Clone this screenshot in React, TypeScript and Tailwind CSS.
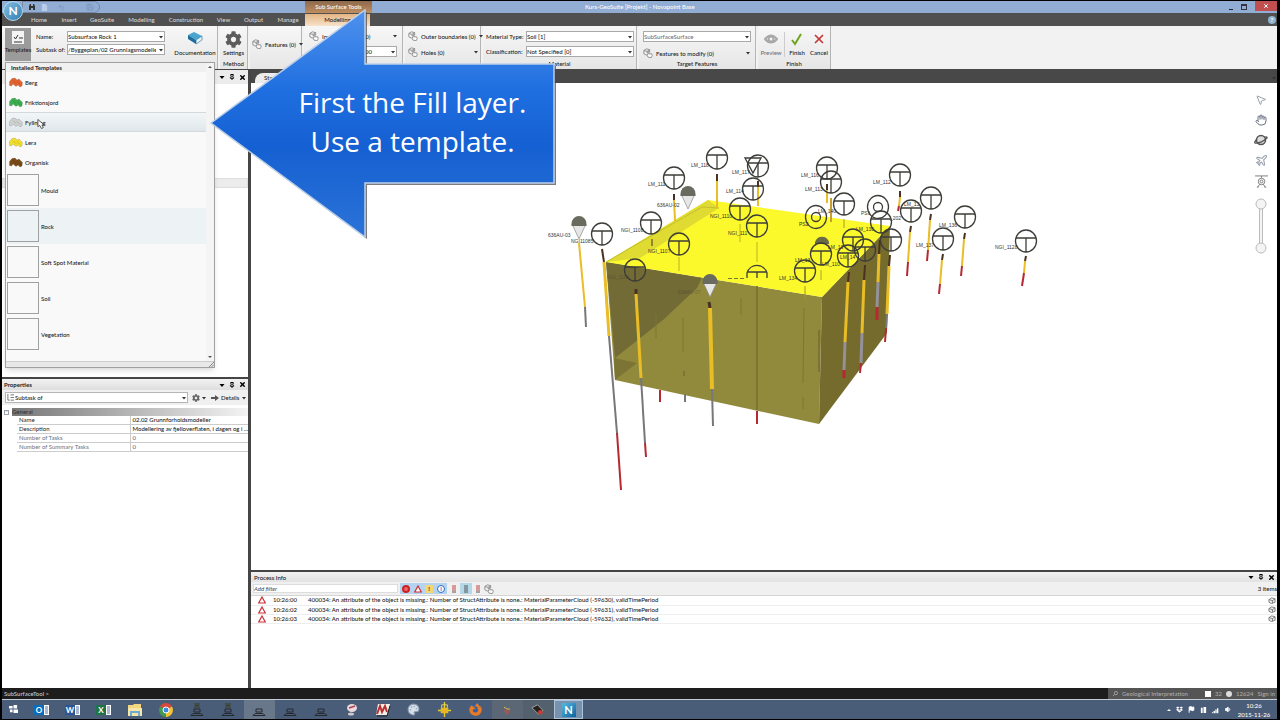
import type { ReactNode } from "react";
import {
  Flag,
  Hand,
  MousePointer2,
  Palette,
  Pin,
  Plane,
  Save,
  SignalHigh,
  Undo2,
  Volume1,
  X,
} from "lucide-react";
import { FaCog, FaDropbox, FaFirefoxBrowser } from "react-icons/fa";

const MENU = [
  { label: "Home", width: "w-[34px]" },
  { label: "Insert", width: "w-[26px]" },
  { label: "GeoSuite", width: "w-[40px]" },
  { label: "Modelling", width: "w-[39px]" },
  { label: "Construction", width: "w-[50px]" },
  { label: "View", width: "w-[25px]" },
  { label: "Output", width: "w-[35px]" },
  { label: "Manage", width: "w-[34px]" },
];

const SOIL_TEMPLATES = [
  { name: "Berg", color: "#e2632f" },
  { name: "Friktionsjord", color: "#3cae50" },
  { name: "Fyllning", color: "#cfd0d0" },
  { name: "Lera", color: "#f0dd2c" },
  { name: "Organisk", color: "#7a4a17" },
];

const MATERIAL_TEMPLATES = ["Mould", "Rock", "Soft Spot Material", "Soil", "Vegetation"];

const PROPERTIES = [
  { name: "Name", value: "02.02 Grunnforholdsmodeller", active: true },
  { name: "Description", value: "Modellering av fjelloverflaten, i dagen og i ...", active: true },
  { name: "Number of Tasks", value: "0", active: false },
  { name: "Number of Summary Tasks", value: "0", active: false },
];

const MESSAGES = [
  { time: "10:26:00", id: "-59630" },
  { time: "10:26:02", id: "-59631" },
  { time: "10:26:03", id: "-59632" },
];

/* Soundings: centre of every round T symbol */
const SOUNDINGS = [
  [717, 158], [674, 178], [758, 166], [753, 189], [740, 209], [757, 226],
  [651, 223], [602, 234], [679, 244], [635, 270], [827, 168], [831, 182],
  [844, 204], [900, 175], [931, 198], [911, 211], [881, 222], [891, 240],
  [965, 217], [943, 239], [1026, 241], [853, 240], [865, 250], [848, 256],
  [821, 254], [805, 271],
];

const RINGS = [[816, 217], [878, 207]];
const CONES = [[688, 194], [579, 224], [710, 282]];

const Y = "#e9bd25";
const G = "#77777c";
const R = "#b52a32";
const K = "#49321f";
const O = "#7d7632";

/* Drill rods, cut into segments by layer: x1, y1, x2, y2, colour, width */
const RODS: Array<[number, number, number, number, string, number]> = [
  [579, 243, 585, 307, Y, 2], [585, 307, 586, 327, G, 2],
  [602, 249, 604, 262, K, 2], [604, 262, 609, 336, Y, 3], [609, 336, 617, 433, G, 2], [617, 433, 621, 490, R, 2],
  [636, 289, 636, 294, K, 3], [636, 294, 641, 378, Y, 3], [641, 378, 645, 443, G, 2], [645, 443, 646, 457, R, 2],
  [709, 302, 710, 308, K, 3], [710, 308, 712, 389, Y, 4], [712, 389, 713, 426, G, 2],
  [660, 390, 660, 402, R, 2], [685, 394, 685, 402, G, 2], [757, 411, 757, 424, R, 2],
  [656, 314, 656, 338, O, 1], [683, 318, 683, 352, O, 1], [684, 371, 684, 376, O, 2],
  [741, 298, 741, 315, O, 1], [757, 286, 757, 410, O, 2], [804, 308, 803, 383, O, 1], [803, 397, 803, 409, O, 1],
  [674, 194, 674, 200, K, 2], [674, 200, 675, 221, Y, 2],
  [717, 174, 717, 181, K, 2], [717, 181, 717, 208, Y, 2],
  [758, 181, 758, 187, K, 2], [758, 187, 758, 206, Y, 2],
  [652, 239, 652, 246, K, 1], [740, 224, 740, 242, "#b8b525", 1], [757, 242, 757, 262, "#b8b525", 1], [679, 257, 679, 271, "#b8b525", 1],
  [827, 184, 827, 190, K, 2], [827, 190, 827, 203, Y, 2], [831, 198, 831, 222, "#c8a02b", 2], [844, 219, 844, 228, "#a59e2a", 1],
  [805, 286, 805, 300, "#9a972a", 1], [821, 270, 821, 280, "#a9a62a", 1],
  [900, 191, 900, 197, K, 2], [900, 197, 899, 206, Y, 2], [899, 206, 898, 211, R, 2],
  [931, 214, 930, 220, K, 2], [930, 220, 928, 250, Y, 2], [928, 250, 927, 261, R, 2],
  [911, 226, 910, 232, K, 2], [910, 232, 908, 262, Y, 2], [908, 262, 907, 276, R, 2],
  [965, 233, 964, 239, K, 2], [964, 239, 962, 266, Y, 2], [962, 266, 961, 276, R, 2],
  [943, 254, 942, 260, K, 2], [942, 260, 940, 284, Y, 2], [940, 284, 939, 294, R, 2],
  [1026, 256, 1025, 261, K, 2], [1025, 261, 1024, 273, Y, 2], [1024, 273, 1022, 286, R, 2],
  [849, 272, 848, 282, K, 2], [848, 282, 845, 342, Y, 3], [845, 342, 844, 370, "#94919a", 3], [844, 370, 844, 378, R, 3],
  [865, 265, 864, 280, K, 2], [864, 280, 862, 333, Y, 3], [862, 333, 861, 363, "#94919a", 3], [861, 363, 860, 373, R, 2],
  [880, 240, 879, 254, K, 2], [879, 254, 878, 282, Y, 3], [878, 282, 877, 307, "#94919a", 3], [877, 307, 877, 320, R, 3],
  [890, 255, 889, 266, K, 2], [889, 266, 887, 314, Y, 3], [887, 314, 886, 328, G, 2], [886, 328, 885, 342, R, 2],
];

const PIN_LABELS: Array<[number, number, string]> = [
  [691, 167, "LM_118"], [648, 186, "LM_111"], [657, 207, "636AU-02"], [732, 174, "LM_117"],
  [726, 193, "LM_114"], [710, 218, "NGI_1110"], [728, 235, "NGI_111"], [621, 232, "NGI_1108"],
  [648, 253, "NGI_1107"], [548, 237, "636AU-03"], [571, 243, "NGI11085"], [607, 279, "NGI_1106"],
  [678, 294, "636AU-07"], [801, 177, "LM_116"], [805, 191, "LM_113"], [873, 184, "LM_112"],
  [904, 206, "LM_13"], [939, 227, "LM_136"], [916, 247, "LM_137"], [995, 249, "NGI_1128"],
  [861, 215, "PS1"], [799, 226, "PS2"], [818, 213, "LM_140"], [856, 231, "LM_130"],
  [828, 249, "LM_13"], [822, 266, "LM_110"], [840, 259, "LM_14"], [795, 262, "LM_13"],
  [779, 280, "LM_134"], [890, 220, "_202"],
];

function Caret({ className }: { className?: string }) {
  return (
    <svg viewBox="0 0 4 4" className={`size-[4px] shrink-0 ${className ?? ""}`}>
      <path d="M0 1 H4 L2 3.500 Z" fill="#333" />
    </svg>
  );
}

function PickIcon() {
  return (
    <svg viewBox="0 0 12 12" className="size-[10px] shrink-0" fill="none" stroke="#777" strokeWidth="0.9">
      <path d="M1 3 L4 1 L8 2 L8 5 M1 3 L5 4 L8 2 M1 3 V7 L4 8.500 M5 4 V6" />
      <path d="M6 11 L4.500 8 L6 8 V4.500 H7.200 V7 H10.500 L11 9 L10 11.500 Z" fill="#fff" />
    </svg>
  );
}

function CubeIcon() {
  return (
    <svg viewBox="0 0 9 8" className="h-[7px] w-[8px]" fill="#eee" stroke="#666" strokeWidth="0.9">
      <path d="M1 3 L4 1 L8 2 V6 L4 7.500 L1 6 Z M1 3 L5 4 L8 2 M5 4 V7" />
    </svg>
  );
}

function Blob({ color }: { color: string }) {
  return (
    <svg viewBox="0 0 14 10" className="h-[11px] w-[14px] shrink-0">
      <path
        d="M0.500 8 L0.500 4 L3 1 L6 0.500 L8 2.500 L10 1.500 L13.500 5 L13 8.500 L11 9.500 L9 7.500 L7 9 L4 6.500 L2.500 8.500 Z"
        fill={color}
        stroke="#00000030"
        strokeWidth="0.7"
      />
      <path d="M4 3 L7 6 M8 4 L11 7" stroke="#00000038" strokeWidth="0.7" />
    </svg>
  );
}

function Combo({ label, value, className, faded }: { label: string; value: string; className: string; faded?: boolean }) {
  return (
    <div className={`relative ${className}`}>
      <select
        aria-label={label}
        className={`block h-[11px] w-full appearance-none border border-[#a9a9a9] bg-white pr-2 text-[6px] leading-[9px] ${
          faded ? "text-gray-500" : "text-[#222]"
        }`}
      >
        <option>{value}</option>
      </select>
      <Caret className="pointer-events-none absolute top-[4px] right-[2px]" />
    </div>
  );
}

function PickButton({ children }: { children: ReactNode }) {
  return (
    <button className="flex w-full items-center gap-[3px] whitespace-nowrap">
      <PickIcon />
      <span>{children}</span>
      <Caret className="ml-auto" />
    </button>
  );
}

function Group({ title, className, children }: { title?: string; className: string; children: ReactNode }) {
  return (
    <section
      className={`mr-[2px] flex shrink-0 flex-col border-r border-[#b5b5b5] bg-gradient-to-b from-[#f7f7f7] to-[#e6e6e6] ${className}`}
    >
      <div className="flex-1">{children}</div>
      {title && <h2 className="h-[9px] text-center leading-[8px]">{title}</h2>}
    </section>
  );
}

function PanelButtons() {
  return (
    <div className="ml-auto flex items-center gap-[4px] pr-[2px] text-black">
      <button aria-label="Menu">
        <svg viewBox="0 0 6 6" className="size-[6px]"><path d="M0.500 2 H5.500 L3 5 Z" /></svg>
      </button>
      <button aria-label="Pin"><Pin className="size-[6px]" strokeWidth={4} /></button>
      <button aria-label="Close"><X className="size-[7px]" strokeWidth={5} /></button>
    </div>
  );
}

function TitleBar() {
  return (
    <header className="relative flex h-[12px] shrink-0 bg-[#92add3]">
      <div className="ml-[20px] flex h-[12px] w-[78px] items-center gap-[5px] rounded-r-full border border-[#7488a5] pl-[5px] text-[#7f9abf]">
        <svg viewBox="0 0 8 8" className="size-[8px]">
          <path d="M1 7 V3 L2 1 H3 V3 H5 V1 H6 L7 3 V7 H5 V5 H3 V7 Z" fill="#333" />
        </svg>
        <svg viewBox="0 0 8 8" className="size-[7px]"><path d="M1 0 H5 L7 2 V8 H1 Z" fill="#b9cdea" /></svg>
        <Undo2 className="ml-[5px] size-[7px]" strokeWidth={3} />
        <Save className="mr-[5px] ml-auto size-[8px]" strokeWidth={3} />
      </div>
      <h1 className="flex-1 pl-[485px] leading-[12px] text-white">Kurs-GeoSuite [Projekt] - Novapoint Base</h1>
      <div className="flex items-center gap-[8px]">
        <button aria-label="Minimize" className="mt-1 h-px w-[4px] bg-[#223]" />
        <button aria-label="Restore" className="size-[6px] border border-t-2 border-[#334]" />
        <button aria-label="Close window" className="flex h-[10px] w-[22px] items-center justify-center self-start bg-[#c0504f] text-white">
          <X className="size-[6px]" strokeWidth={4} />
        </button>
      </div>
      <div className="absolute top-0 left-[303px] h-[12px] w-[67px] bg-gradient-to-b from-[#8c6a4c] to-[#c08e60] text-center leading-[11px] text-white">
        Sub Surface Tools
      </div>
      <button
        aria-label="Application menu"
        className="absolute top-0 left-px z-10 flex size-[20px] items-center justify-center rounded-full border border-[#b8d8ea] bg-gradient-to-br from-[#86bede] to-[#2b7eb5] text-[12px] leading-none font-bold text-white"
      >
        N
      </button>
    </header>
  );
}

function MenuBar() {
  return (
    <nav className="flex h-[13px] shrink-0 items-center bg-[#505050] pl-[20px] text-[#d4d4d4]">
      {MENU.map(({ label, width }) => (
        <a key={label} href="#" className={`shrink-0 text-center leading-[13px] whitespace-nowrap ${width}`}>
          {label}
        </a>
      ))}
      <a
        href="#"
        className="mt-px h-[12px] w-[65px] shrink-0 bg-gradient-to-b from-[#e4b483] to-[#f6e3cb] text-center leading-[12px] text-[#222]"
      >
        Modelling
      </a>
      <button className="mr-px ml-auto size-[8px] rounded-full bg-[#8fb3d0] text-center leading-[8px] font-bold text-white">
        ?
      </button>
    </nav>
  );
}

function TemplateMenu() {
  return (
    <div className="absolute top-[36px] left-[3px] z-20 flex w-[210px] flex-col border border-[#a0a0a0] bg-[#f9f9f9] shadow-md">
      <div className="flex">
        <div className="flex-1 pb-[9px]">
          <h3 className="h-[9px] bg-[#f0f0f0] pl-[5px] leading-[9px] font-bold">Installed Templates</h3>
          {SOIL_TEMPLATES.map(({ name, color }) => (
            <button
              key={name}
              className={`flex h-[20px] w-full items-center gap-[2px] pl-[3px] ${
                name === "Fyllning" ? "border-y border-[#d3dadd] bg-gradient-to-b from-[#f2f6f8] to-[#e0e7eb]" : ""
              }`}
            >
              <Blob color={color} />
              {name}
            </button>
          ))}
          {MATERIAL_TEMPLATES.map((name) => (
            <button
              key={name}
              className={`flex h-[36px] w-full items-center gap-[2px] pl-px ${name === "Rock" ? "bg-[#edf2f5]" : ""}`}
            >
              <span className="size-[32px] border border-[#a0a0a0]" />
              {name}
            </button>
          ))}
        </div>
        <div className="flex w-[8px] flex-col items-center justify-between bg-[#f4f4f4] py-[2px]">
          <svg viewBox="0 0 4 4" className="size-[4px]"><path d="M0 3 L2 1 L4 3 Z" fill="#555" /></svg>
          <svg viewBox="0 0 4 4" className="size-[4px]"><path d="M0 1 L2 3 L4 1 Z" fill="#555" /></svg>
        </div>
      </div>
      <div className="flex h-[6px] justify-end border-t border-[#ccc] bg-[#e8e8e8]">
        <svg viewBox="0 0 5 5" className="size-[5px]"><path d="M0 5 L5 0 M2.500 5 L5 2.500" stroke="#888" /></svg>
      </div>
      <svg viewBox="0 0 10 12" className="absolute top-[55px] left-[31px] h-[12px] w-[9px]">
        <path d="M1 1 L1 9 L3 7.500 L5 11 L7 10 L5.500 7 H8 Z" fill="#fff" stroke="#333" strokeWidth="0.9" />
      </svg>
    </div>
  );
}

function Ribbon() {
  return (
    <div className="relative flex h-[43px] shrink-0 bg-[#f2f2f2]">
      <Group className="w-[216px]">
        <div className="flex pl-[3px]">
          <button className="mt-[2px] flex h-[33px] w-[26px] shrink-0 flex-col items-center bg-[#9b9b9b]">
            <svg viewBox="0 0 14 14" className="mt-[3px] size-[14px]">
              <rect x="1" y="0" width="12" height="13" fill="#f4f4f4" />
              <path d="M3 6 L4.500 8 L7 4 M8 7 H12 M3 11 H11" stroke="#333" fill="none" />
            </svg>
            <span className="leading-[9px]">Templates</span>
          </button>
          <div className="ml-[5px] flex w-[129px] shrink-0 flex-col gap-[2px] pt-[5px]">
            <div className="flex items-center">
              <span className="w-[31px] shrink-0 whitespace-nowrap">Name:</span>
              <Combo label="Name" value="Subsurface Rock 1" className="w-[98px]" />
            </div>
            <div className="flex items-center">
              <span className="w-[31px] shrink-0 whitespace-nowrap">Subtask of:</span>
              <Combo label="Subtask of" value="/Byggeplan/02 Grunnlagsmodeller" className="w-[98px]" />
            </div>
          </div>
          <button className="ml-[9px] flex w-[42px] shrink-0 flex-col items-center gap-[3px] pt-[6px]">
            <svg viewBox="0 0 16 13" className="h-[13px] w-[16px]">
              <path d="M1 3 L7 0 L15 4 L9 8 Z" fill="#4aa6cf" />
              <path d="M1 3 L9 8 V12 L1 7 Z" fill="#1c6c9c" />
              <path d="M9 8 L15 4 V8 L9 12 Z" fill="#e8f2f7" stroke="#1c6c9c" strokeWidth="0.6" />
            </svg>
            <span className="leading-[9px]">Documentation</span>
          </button>
        </div>
      </Group>
      <Group title="Method" className="w-[28px]">
        <button className="flex w-full flex-col items-center pt-[5px]">
          <FaCog className="size-[17px] text-[#5c5c5c]" />
          <span className="leading-[10px]">Settings</span>
        </button>
      </Group>
      <Group className="w-[52px]">
        <div className="pt-[13px] pr-[5px] pl-[2px]"><PickButton>Features (0)</PickButton></div>
      </Group>
      <Group className="w-[99px]">
        <div className="flex flex-col gap-[5px] px-[5px] pt-[5px]">
          <PickButton>Inner boundary (0)</PickButton>
          <Combo label="Depth" value="0.00" className="ml-[50px] w-[38px]" />
        </div>
      </Group>
      <Group className="w-[76px]">
        <div className="flex flex-col gap-[6px] pt-[5px] pr-[2px] pl-[3px]">
          <PickButton>Outer boundaries (0)</PickButton>
          <PickButton>Holes (0)</PickButton>
        </div>
      </Group>
      <Group title="Material" className="w-[154px]">
        <div className="flex flex-col gap-[4px] pt-[5px] pl-[3px]">
          <div className="flex items-center">
            <span className="w-[40px] shrink-0 whitespace-nowrap">Material Type:</span>
            <Combo label="Material Type" value="Soil [1]" className="w-[108px]" />
          </div>
          <div className="flex items-center">
            <span className="w-[40px] shrink-0 whitespace-nowrap">Classification:</span>
            <Combo label="Classification" value="Not Specified [0]" className="w-[108px]" />
          </div>
        </div>
      </Group>
      <Group title="Target Features" className="w-[117px]">
        <div className="flex flex-col gap-[6px] pt-[5px] pr-[5px] pl-[4px]">
          <Combo label="Target surface" value="SubSurfaceSurface" faded className="w-[108px]" />
          <PickButton>Features to modify (0)</PickButton>
        </div>
      </Group>
      <Group title="Finish" className="w-[73px]">
        <div className="flex pt-[6px]">
          <button className="flex w-[27px] flex-col items-center gap-[2px] border-r border-[#ccc] text-gray-500">
            <svg viewBox="0 0 14 14" className="size-[14px]" fill="none" stroke="#a8a8a8">
              <path d="M1 7 Q7 0 13 7 Q7 14 1 7 Z" strokeWidth="2" />
              <circle cx="7" cy="7" r="2.500" strokeWidth="2" />
            </svg>
            Preview
          </button>
          <button className="flex w-[24px] flex-col items-center gap-[2px]">
            <svg viewBox="0 0 14 14" className="size-[14px]"><path d="M2 8 L5 12 L11 2" fill="none" stroke="#6fa51e" strokeWidth="2" /></svg>
            Finish
          </button>
          <button className="flex w-[20px] flex-col items-center gap-[2px]">
            <X className="size-[14px] text-[#c23b3b]" strokeWidth={3} />
            Cancel
          </button>
        </div>
      </Group>
      <TemplateMenu />
    </div>
  );
}

function PropertiesPanel() {
  return (
    <aside className="flex w-[246px] shrink-0 flex-col">
      <div className="mt-px flex h-[14px] shrink-0 bg-[#ececec]"><PanelButtons /></div>
      <div className="h-[293px] shrink-0 bg-white pt-[94px]">
        <div className="h-[10px] border border-[#dedede] bg-[#ececec]" />
      </div>
      <div className="mt-[2px] flex h-[11px] shrink-0 items-center bg-gradient-to-b from-[#f2f2f2] to-[#dedede] pl-[2px]">
        <h2 className="font-bold">Properties</h2>
        <PanelButtons />
      </div>
      <div className="flex h-[15px] shrink-0 items-center bg-[#f0f0f0] pl-[3px]">
        <div className="relative w-[183px]">
          <select aria-label="Object" className="block h-[11px] w-full appearance-none border border-[#b5b5b5] bg-white pl-[9px] text-[6px] leading-[9px]">
            <option>Subtask of</option>
          </select>
          <svg viewBox="0 0 8 8" className="pointer-events-none absolute top-[2px] left-[2px] size-[7px]">
            <path d="M1 0 V7 H3 M4 1 H8 M4 4 H8 M4 7 H8" stroke="#666" fill="none" />
          </svg>
          <Caret className="pointer-events-none absolute top-[4px] right-[2px]" />
        </div>
        <button aria-label="Options" className="ml-[4px] flex items-center gap-[2px]">
          <FaCog className="size-[8px] text-[#666]" />
          <Caret />
        </button>
        <button className="ml-[5px] flex items-center gap-[2px]">
          <svg viewBox="0 0 8 6" className="h-[6px] w-[8px]"><path d="M0 2 H4 V0 L8 3 L4 6 V4 H0 Z" fill="#555" /></svg>
          Details
          <Caret className="ml-px" />
        </button>
      </div>
      <div className="min-h-0 flex-1 bg-white pt-[3px]">
        <div className="flex h-[8px] items-center gap-[3px] pl-[2px]">
          <button aria-label="Collapse" className="size-[5px] border border-gray-400 text-[4px] leading-[2px]">-</button>
          <h3 className="flex-1 bg-gradient-to-r from-[#777] via-[#b5b5b5] to-[#f4f4f4] leading-[8px] text-[#333]">General</h3>
        </div>
        <table className="ml-[15px] w-[231px] table-fixed border-collapse">
          <tbody>
            {PROPERTIES.map(({ name, value, active }) => (
              <tr key={name} className={`h-[8px] border-b border-[#ccc] ${active ? "text-[#222]" : "text-gray-500"}`}>
                <th className="w-[113px] border-r border-[#ccc] pl-[2px] text-left leading-[8px] font-normal">{name}</th>
                <td className="pl-[2px] leading-[8px] whitespace-nowrap">{value}</td>
              </tr>
            ))}
          </tbody>
        </table>
      </div>
    </aside>
  );
}

function Scene() {
  return (
    <svg
      viewBox="251 83 1026 487"
      className="block h-full w-full"
      role="img"
      aria-label="Soil model"
      fontFamily='"Liberation Sans", sans-serif'
      fontSize="5"
    >
      {/* soil volume */}
      <path d="M606 262 L822 297 L819 424 L615 380 Z" fill="#918a3c" />
      <path d="M606 262 L702 278 L697 288 L663 320 L615 358 Z" fill="#736b35" />
      <path d="M614 358 L637 363 L615 380 Z" fill="#7b7435" />
      <path d="M822 297 L890 226 L887 333 L819 424 Z" fill="#746b2d" />
      <path d="M606 262 L708 200 L890 226 L822 297 Z" fill="#fbf92c" />
      <path d="M606 262 L708 200 L719 208 L640 258 Z" fill="#dfdb32" />
      <path d="M606 262 L702 207 L719 208" fill="none" stroke="#c4bf30" />
      <path d="M819 330 V372" stroke="#665f28" />

      {RODS.map(([x1, y1, x2, y2, color, width], i) => (
        <line key={i} x1={x1} y1={y1} x2={x2} y2={y2} stroke={color} strokeWidth={width} />
      ))}

      <g fill="#333">
        {PIN_LABELS.map(([x, y, text]) => (
          <text key={`${x}-${y}`} x={x} y={y} opacity={text === "636AU-07" || text === "NGI_1106" ? 0.4 : 1}>
            {text}
          </text>
        ))}
      </g>

      {CONES.map(([x, y]) => (
        <g key={x}>
          <path d={`M${x - 7} ${y} L${x} ${y + 15} L${x + 7} ${y} Z`} fill="#e6e6e6" stroke="#8a8a8a" strokeWidth="0.7" />
          <path d={`M${x - 7.5} ${y + 2} V${y} A7.5 8 0 0 1 ${x + 7.5} ${y} V${y + 2} Z`} fill="#696b5f" />
        </g>
      ))}
      <path d="M815 244 V242 A7.5 8 0 0 1 829 242 V244 Z" fill="#6b6c45" />

      <g fill="none" stroke="#3d3d38" strokeWidth="1.3">
        {SOUNDINGS.map(([x, y]) => (
          <path
            key={`${x}-${y}`}
            d={`M${x - 10.5} ${y} a10.5 11 0 1 0 21 0 a10.5 11 0 1 0 -21 0 M${x - 10} ${y - 3} h20 M${x} ${y - 3} v14`}
          />
        ))}
        {RINGS.map(([x, y]) => (
          <g key={x}>
            <ellipse cx={x} cy={y} rx="10.5" ry="11.5" />
            <circle cx={x} cy={y} r="4.5" />
          </g>
        ))}
        <path d="M745 158 H761 L753 173 Z" />
        <path d="M747 278 V273 A10.5 11 0 0 1 767 273 V278 M747 272 H767 M757 272 V278" />
        <path d="M728 278.500 H746" strokeWidth="0.7" strokeDasharray="4 2" />
      </g>
    </svg>
  );
}

function ViewTools() {
  return (
    <div className="absolute top-[11px] right-[9px] flex flex-col items-center gap-[8px] text-gray-400">
      <button aria-label="Select"><MousePointer2 className="size-[12px]" strokeWidth={2} /></button>
      <button aria-label="Pan"><Hand className="size-[12px] text-gray-500" strokeWidth={2} /></button>
      <button aria-label="Orbit">
        <svg viewBox="0 0 14 12" className="h-[12px] w-[14px]" fill="none" stroke="#555">
          <circle cx="7" cy="6" r="4.500" fill="#ddd" strokeWidth="1.500" />
          <path d="M2.500 5.500 Q0 8.500 1 9 Q7 9.500 13 4 Q13.500 2.500 11 3.200" strokeWidth="1.300" />
        </svg>
      </button>
      <button aria-label="Fly"><Plane className="size-[13px]" strokeWidth={2} /></button>
      <button aria-label="Helicopter">
        <svg viewBox="0 0 14 14" className="size-[13px]" fill="none" stroke="#777">
          <path d="M0 1 H14 M7 1 V3 M3 13 L5 10 M11 13 L9 10 M2 13 H4 M10 13 H12" />
          <circle cx="7" cy="7" r="3.500" />
          <circle cx="7" cy="7" r="1.500" />
        </svg>
      </button>
      <svg viewBox="0 0 12 56" className="mt-[2px] h-[56px] w-[12px]" fill="#f4f4f4" stroke="#bbb">
        <rect x="4.500" y="6" width="3" height="44" />
        <circle cx="6" cy="6" r="5" />
        <circle cx="6" cy="50" r="5" />
      </svg>
    </div>
  );
}

function Warning() {
  return (
    <svg viewBox="0 0 8 8" className="size-[8px] shrink-0">
      <path d="M4 1 L7.300 7 H0.700 Z" fill="#fff" stroke="#cc2f35" strokeWidth="1.200" />
    </svg>
  );
}

function ProcessInfo() {
  return (
    <section className="mt-[2px] flex h-[116px] shrink-0 flex-col bg-white">
      <div className="flex h-[10px] items-center bg-gradient-to-b from-[#f2f2f2] to-[#e2e2e2] pl-[3px]">
        <h2>Process Info</h2>
        <PanelButtons />
      </div>
      <div className="flex h-[14px] items-center border-b border-[#d5d5d5] bg-[#f0f0f0] pl-[2px]">
        <input
          aria-label="Filter"
          placeholder="Add filter"
          className="h-[9px] w-[145px] border border-[#ddd] bg-white text-[6px] italic placeholder:text-gray-600"
        />
        <div className="ml-[2px] flex h-[11px] items-center bg-[#b4d3f0]">
          <button aria-label="Errors" className="flex w-[12px] justify-center">
            <span className="size-[8px] rounded-full border-2 border-[#c22] bg-[#e66]" />
          </button>
          <button aria-label="Warnings" className="flex w-[11px] justify-center"><Warning /></button>
          <button aria-label="Notices" className="flex w-[12px] justify-center">
            <span className="size-[8px] bg-[#f3d775] text-center leading-[8px] font-bold">!</span>
          </button>
          <button aria-label="Information" className="flex w-[12px] justify-center">
            <span className="size-[8px] rounded-full border border-[#2870bd] bg-white text-center leading-[6px] font-bold text-[#2870bd]">i</span>
          </button>
        </div>
        <div className="ml-px flex">
          {["Top", "Level", "Bottom"].map((name) => (
            <button key={name} aria-label={name} className={`flex h-[11px] w-[12px] items-center justify-center ${name === "Level" ? "bg-[#b4d8e8]" : ""}`}>
              <svg viewBox="0 0 6 8" className="h-[8px] w-[6px]">
                <path d="M1 1 H5 M1 3 H5 M1 5 H5" stroke={name === "Level" ? "#555" : "#b44"} />
                <path d="M1 7 H5" stroke="#555" />
              </svg>
            </button>
          ))}
          <button aria-label="Pick"><PickIcon /></button>
        </div>
        <span className="ml-auto">3 items</span>
      </div>
      <table className="w-full border-collapse">
        <tbody>
          {MESSAGES.map(({ time, id }) => (
            <tr key={time} className="h-[9px] border-b border-[#eee] leading-[8px]">
              <td className="w-[22px] pl-[7px]"><Warning /></td>
              <td className="w-[35px]">{time}</td>
              <td>
                400034: An attribute of the object is missing.: Number of StructAttribute is none.: MaterialParameterCloud ({id}), validTimePeriod
              </td>
              <td className="w-[9px]"><CubeIcon /></td>
            </tr>
          ))}
        </tbody>
      </table>
    </section>
  );
}

function Callout() {
  return (
    <div className="absolute top-[7px] left-[209px] z-30 h-[234px] w-[350px]">
      <svg viewBox="209 7 350 234" className="block h-full w-full">
        <defs>
          <linearGradient id="callout" x1="0" y1="0" x2="0" y2="1">
            <stop offset="0" stopColor="#4f92ee" />
            <stop offset="0.35" stopColor="#1f6fe0" />
            <stop offset="0.6" stopColor="#1560d2" />
            <stop offset="1" stopColor="#2b73d8" />
          </linearGradient>
        </defs>
        <path d="M213 125 L367 12 V66 H556 V185 H367 V239 Z" fill="#444" opacity="0.7" />
        <path d="M211 123 L365 10 V64 H554 V183 H365 V237 Z" fill="url(#callout)" stroke="#bcd0ea" strokeWidth="1.500" />
      </svg>
      <p className="absolute top-[76px] left-[75px] w-[257px] text-center font-['Open_Sans',sans-serif] text-[28px] leading-[39px] whitespace-nowrap text-white">
        First the Fill layer.
        <br />
        Use a template.
      </p>
    </div>
  );
}

function TaskIcon({ name, children, active }: { name: string; children: ReactNode; active?: boolean }) {
  return (
    <button
      aria-label={name}
      className={`mr-[2px] flex h-[19px] w-[29px] shrink-0 items-center justify-center ${active ? "border border-[#a9c3dd] bg-[#7891ad]" : ""}`}
    >
      {children}
    </button>
  );
}

function OfficeTile({ letter, className }: { letter: string; className: string }) {
  return (
    <span className="flex items-center">
      <span className={`flex size-[10px] items-center justify-center text-[8px] leading-none font-bold text-white ${className}`}>{letter}</span>
      <span className="h-[10px] w-[5px] border border-white bg-[#a8bad2]" />
    </span>
  );
}

function Laptop({ marked }: { marked?: boolean }) {
  return (
    <svg viewBox="0 0 14 14" className="size-[14px]" fill="none" stroke="#252a30">
      {marked && <path d="M4 1 H10 M5 2.500 H9 M4 4 H10" stroke="#3a3f22" />}
      <path d="M4 6 H10 V9 H4 Z M1 12.500 L3 10.500 H11 L13 12.500 Z" />
    </svg>
  );
}

function Taskbar() {
  return (
    <footer className="flex h-[20px] shrink-0 items-center border-t border-[#c5ccd5] bg-[#4a5d78]">
      <button aria-label="Start" className="flex w-[25px] justify-center pr-[3px]">
        <svg viewBox="0 0 10 10" className="size-[9px]" fill="#fff"><path d="M0 1 H4 V4 H0 Z M5 0 H9 V4 H5 Z M1 5 H4 V8 H1 Z M5 5 H10 V9 H5 Z" /></svg>
      </button>
      <TaskIcon name="Outlook"><OfficeTile letter="O" className="bg-[#0a6cbd]" /></TaskIcon>
      <TaskIcon name="Word"><OfficeTile letter="W" className="bg-[#2b579a]" /></TaskIcon>
      <TaskIcon name="Excel"><OfficeTile letter="X" className="bg-[#217346]" /></TaskIcon>
      <TaskIcon name="Explorer">
        <svg viewBox="0 0 16 14" className="h-[14px] w-[16px]">
          <path d="M1 2 H6 L7 1 H14 V13 H1 Z" fill="#f2d680" />
          <path d="M1 5 H15 V13 H1 Z" fill="#f7e6a8" />
          <path d="M4 13 V9 H12 V13" fill="none" stroke="#6da9d2" strokeWidth="2" />
        </svg>
      </TaskIcon>
      <TaskIcon name="Chrome">
        <svg viewBox="0 0 14 14" className="size-[14px]">
          <path d="M7 7 L1 3.500 A7 7 0 0 1 13 3.500 Z" fill="#d9493a" />
          <path d="M7 7 L13 3.500 A7 7 0 0 1 7 14 Z" fill="#f4c430" />
          <path d="M7 7 L7 14 A7 7 0 0 1 1 3.500 Z" fill="#3f9b4f" />
          <circle cx="7" cy="7" r="3" fill="#4287e5" stroke="#fff" />
        </svg>
      </TaskIcon>
      <TaskIcon name="Remote 1"><Laptop marked /></TaskIcon>
      <TaskIcon name="Remote 2"><Laptop marked /></TaskIcon>
      <span className="bg-[#687789]"><TaskIcon name="Remote 3"><Laptop /></TaskIcon></span>
      <TaskIcon name="Remote 4"><Laptop /></TaskIcon>
      <TaskIcon name="Remote 5"><Laptop /></TaskIcon>
      <TaskIcon name="Snap">
        <svg viewBox="0 0 12 12" className="size-[12px]">
          <ellipse cx="6" cy="4" rx="5" ry="4" fill="#ead9df" />
          <path d="M3 4 L9 2" stroke="#ad4150" strokeWidth="1.500" />
          <ellipse cx="5" cy="10" rx="3" ry="1.500" fill="#d5c5cc" />
        </svg>
      </TaskIcon>
      <TaskIcon name="Novapoint Web">
        <svg viewBox="0 0 16 14" className="h-[14px] w-[16px]">
          <path d="M3 1 H15 L12 12 H1 Z" fill="#f4eee9" />
          <path d="M2 11 L5 3 L7 9 L10 3 L12 9" fill="none" stroke="#b92d2d" strokeWidth="2" />
          <path d="M2 13 H12 L15 3" fill="none" stroke="#252525" />
        </svg>
      </TaskIcon>
      <TaskIcon name="Paint"><Palette className="size-[13px] fill-[#d5e0ea] text-[#8b9caf]" /></TaskIcon>
      <TaskIcon name="License">
        <svg viewBox="0 0 16 16" className="size-[15px]">
          <path d="M8 0 V16 M1 9 H15" stroke="#e2cf2d" strokeWidth="1.500" />
          <rect x="4" y="6" width="8" height="6" fill="#e7b622" />
          <path d="M5 6 V3 H11 V6" fill="none" stroke="#ead75a" />
        </svg>
      </TaskIcon>
      <TaskIcon name="Firefox">
        <span className="flex size-[13px] items-center justify-center rounded-full bg-[#355f9f]"><FaFirefoxBrowser className="size-[13px] text-[#e77a26]" /></span>
      </TaskIcon>
      <span className="bg-[#5b6774]">
        <TaskIcon name="Console">
          <svg viewBox="0 0 8 8" className="size-[8px]"><path d="M1 1 L4 3 H7" stroke="#e5b93a" fill="none" /><path d="M1 5 H7 M2 7 H6" stroke="#d64b3c" /></svg>
        </TaskIcon>
      </span>
      <span className="bg-[#53606d]">
        <TaskIcon name="Recorder">
          <svg viewBox="0 0 14 14" className="size-[13px]"><path d="M1 5 L7 2 L13 8 L8 12 Z" fill="#27211e" stroke="#aaa" /><circle cx="10" cy="10" r="2.500" fill="#c83c35" /></svg>
        </TaskIcon>
      </span>
      <TaskIcon name="Novapoint" active>
        <span className="flex size-[14px] items-center justify-center bg-gradient-to-br from-[#55b9df] to-[#09659f] text-[11px] leading-none font-bold text-white">N</span>
      </TaskIcon>
      <div className="ml-auto flex items-center gap-[5px] pr-[6px] text-white">
        <svg viewBox="0 0 4 4" className="size-[4px]"><path d="M0 3 L2 1 L4 3 Z" fill="#fff" /></svg>
        <FaDropbox className="size-[7px]" />
        <Flag className="size-[7px] fill-white" strokeWidth={3} />
        <svg viewBox="0 0 8 8" className="size-[7px]"><path d="M1 2 H3 V8 H1 Z M4 1 H7 V8 H4 Z" fill="#fff" /></svg>
        <SignalHigh className="size-[8px]" strokeWidth={4} />
        <Volume1 className="size-[7px] fill-white" strokeWidth={3} />
        <div className="w-[34px] text-center leading-[9px]">
          10:26
          <br />
          2015-11-26
        </div>
      </div>
    </footer>
  );
}

export default function App() {
  return (
    <div className="relative flex h-screen flex-col overflow-hidden bg-black pt-px pr-[3px] pb-px pl-[2px] font-['Lato',sans-serif] text-[6px] leading-[9px] font-medium text-[#222]">
      <TitleBar />
      <MenuBar />
      <Ribbon />
      <main className="flex min-h-0 flex-1 gap-[3px] bg-[#454545]">
        <PropertiesPanel />
        <div className="flex min-w-0 flex-1 flex-col">
          <div className="flex h-[14px] shrink-0 items-center bg-[#484848] pt-[4px] pl-[4px]">
            <div className="h-[10px] w-[70px] rounded-tl-lg bg-[#ececec] pl-[9px]">Start Page</div>
            <Caret className="mr-px ml-auto" />
          </div>
          <div className="relative min-h-0 flex-1 bg-white">
            <Scene />
            <ViewTools />
          </div>
          <ProcessInfo />
        </div>
      </main>
      <div className="flex h-[11px] shrink-0 items-center bg-[#1d1d1d] pl-[2px] text-[#ccc]">
        <span>SubSurfaceTool &gt;</span>
        <div className="ml-auto flex h-full w-[169px] items-center gap-[4px] bg-[#555] pr-[2px] pl-[5px] whitespace-nowrap text-[#aaa]">
          <svg viewBox="0 0 6 6" className="size-[5px]" fill="none" stroke="#aaa"><circle cx="3.500" cy="2.500" r="2" /><path d="M2 4 L0 6" /></svg>
          <span>Geological Interpretation</span>
          <span className="ml-auto size-[6px] bg-white" />
          <span>32</span>
          <span className="size-[6px] rounded-full bg-[#ddd]" />
          <span>12624</span>
          <span>Sign in</span>
        </div>
      </div>
      <Taskbar />
      <Callout />
    </div>
  );
}
